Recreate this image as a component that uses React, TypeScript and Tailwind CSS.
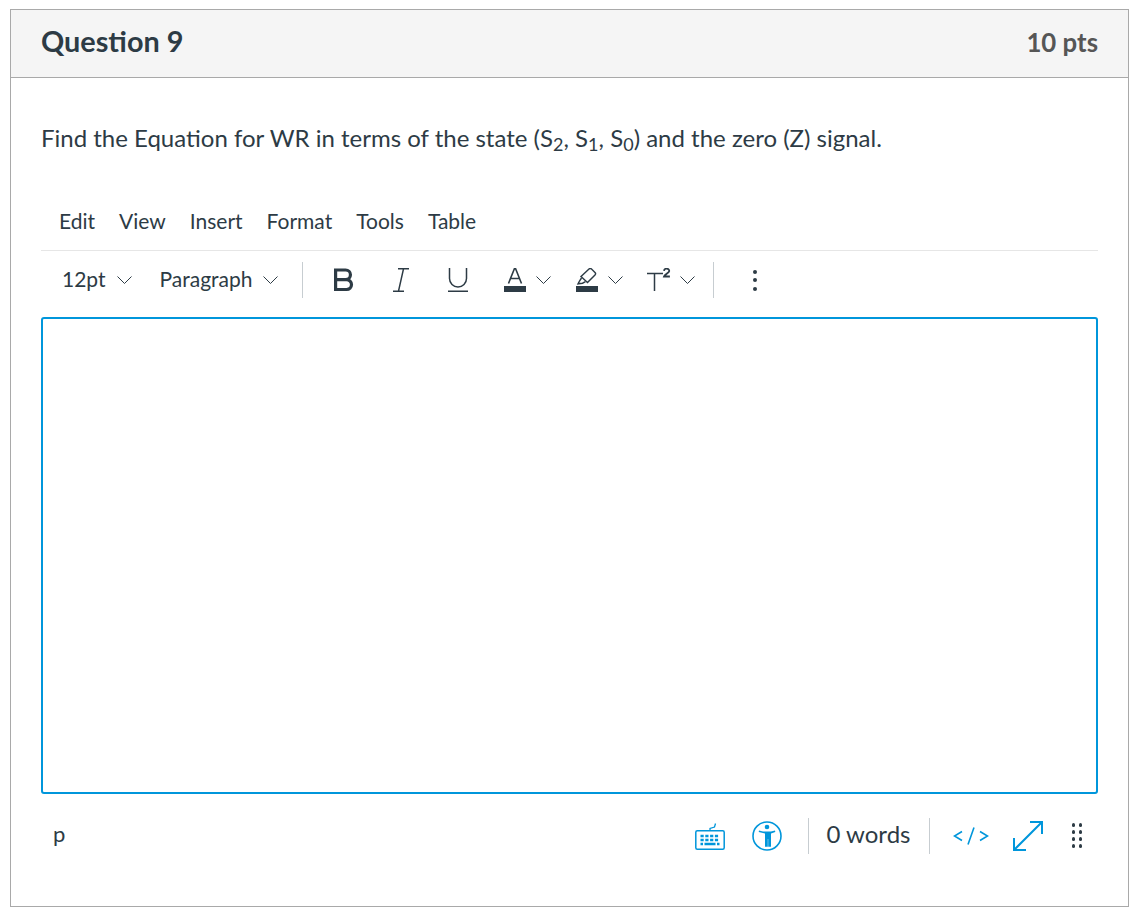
const Chev = () => (
  <svg width="15" height="8" viewBox="0 0 15 8" fill="none" stroke="#2d3b45" strokeWidth="1" className="mt-[-1px]">
    <path d="M.5.5l7 7 7-7" />
  </svg>
);

const Divider = ({ className }: { className: string }) => <div className={`w-px bg-[#c7cdd1] ${className}`} />;

const menus = [
  { name: "Edit", cls: "ml-[18px]" },
  { name: "View", cls: "ml-[24px]" },
  { name: "Insert", cls: "ml-[24px]" },
  { name: "Format", cls: "ml-[24px]" },
  { name: "Tools", cls: "ml-[24px]" },
  { name: "Table", cls: "ml-[24px]" },
];

const App = () => {
  return (
    <div className="w-[1143px] h-[916px] bg-white pt-[9px] pl-[10px] font-['Lato',sans-serif] text-[#2d3b45] overflow-hidden">
      <div className="w-[1119px] h-[898px] border border-[#a9a9a9] flex flex-col">
        {/* Header */}
        <div className="h-[68px] shrink-0 bg-[#f5f5f5] border-b border-[#a9a9a9] flex items-center justify-between pl-[30px] pr-[30px]">
          <div className="text-[28.8px] font-bold leading-none -mt-[5px]">Question 9</div>
          <div className="text-[25.8px] font-bold leading-none text-[#565656] -mt-[1px]">10 pts</div>
        </div>

        {/* Question text */}
        <div className="pl-[30px] pt-[44px] text-[24px] leading-[32px] h-[126px] shrink-0">
          Find the Equation for WR in terms of the state (S<sub className="text-[18px] leading-none -bottom-[4px]">2</sub>, S
          <sub className="text-[18px] leading-none -bottom-[4px]">1</sub>, S<sub className="text-[18px] leading-none -bottom-[4px]">0</sub>) and the zero (Z) signal.
        </div>

        {/* Editor */}
        <div className="pl-[30px] pr-[30px] flex flex-col">
          <div className="h-[47px] pb-[12px] flex items-center text-[21px] border-b border-[#e6e6e6]">
            {menus.map((m) => (
              <span key={m.name} className={m.cls}>
                {m.name}
              </span>
            ))}
          </div>

          <div className="h-[58px] mb-[8px] flex items-center text-[21px]">
            <span className="ml-[21px] -mt-[2px]">12pt</span>
            <span className="ml-[11px]"><Chev /></span>
            <span className="ml-[28px] -mt-[2px]">Paragraph</span>
            <span className="ml-[11px]"><Chev /></span>
            <Divider className="h-[36px] ml-[24px]" />
            <svg className="ml-[31px]" width="20" height="24" viewBox="0 0 20 24" fill="none" stroke="#2d3b45" strokeWidth="3.200">
              <path d="M1.600 2h10a4.800 4.800 0 0 1 0 9.700h-10 11a4.900 4.900 0 0 1 0 9.800h-11z" />
            </svg>
            <svg className="ml-[39px]" width="16" height="24" viewBox="0 0 16 24" fill="none" stroke="#2d3b45" strokeWidth="1.500">
              <path d="M5 .8h11M0 23.200h11M10.500.8 5.500 23.200" />
            </svg>
            <svg className="ml-[39px]" width="20" height="24" viewBox="0 0 20 24" fill="none" stroke="#2d3b45" strokeWidth="1.500">
              <path d="M1.500 0v10.500a8.500 8.500 0 0 0 17 0V0M0 23.200h20" />
            </svg>
            <svg className="ml-[36px]" width="22" height="24" viewBox="0 0 22 24" fill="none" stroke="#2d3b45">
              <path d="M4.500 15.500 10.500.5h1l6 15M6.500 10.500h9" strokeWidth="1.600" />
              <rect x="0" y="18" width="22" height="6" fill="#2d3b45" stroke="none" />
            </svg>
            <span className="ml-[10px]"><Chev /></span>
            <svg className="ml-[25px]" width="22" height="24" viewBox="0 0 22 24" fill="none" stroke="#2d3b45">
              <path d="M5 8.500 13 1a1.800 1.800 0 0 1 2.500 0L19 4.500a1.800 1.800 0 0 1 0 2.500l-7.500 7.500z" strokeWidth="1.400" />
              <path d="M5.500 10 3.500 13 2 15.800l4.500-.6 3-1.500" strokeWidth="1.400" />
              <rect x="0" y="18" width="22" height="6" fill="#2d3b45" stroke="none" />
            </svg>
            <span className="ml-[10px]"><Chev /></span>
            <svg className="ml-[24px]" width="24" height="24" viewBox="0 0 24 24" fill="none" stroke="#2d3b45">
              <path d="M0 5.500h16M7.500 5.500V23" strokeWidth="1.500" />
              <path d="M17 2.800c.300-3 5.500-2.700 5.200.3-.200 1.700-4.600 3.500-5.200 5.400h5.900" strokeWidth="1.800" />
            </svg>
            <span className="ml-[9px]"><Chev /></span>
            <Divider className="h-[36px] ml-[18px]" />
            <div className="ml-[39px] flex flex-col gap-[4.500px]">
              <div className="w-[4px] h-[4px] rounded-full bg-[#2d3b45]" />
              <div className="w-[4px] h-[4px] rounded-full bg-[#2d3b45]" />
              <div className="w-[4px] h-[4px] rounded-full bg-[#2d3b45]" />
            </div>
          </div>

          <div className="h-[477px] border-2 border-[#0096db] rounded-[3px]" />

          {/* Status bar */}
          <div className="h-[83px] flex items-center text-[#2d3b45]">
            <span className="ml-[12px] text-[22px] -mt-[5px]">p</span>
            <div className="ml-auto mr-[16px] flex items-center">
              <svg width="30" height="27" viewBox="0 0 30 27" fill="none" stroke="#0096db" strokeWidth="1.500" className="mt-[2px]">
                <rect x=".8" y="7.800" width="28.400" height="18.400" rx="1.500" />
                <path d="M15 7.500V5.500l4.500-1.500L20.500.5" strokeWidth="1.300" />
                <path d="M5.500 13h3.200M10.300 13h3.200M15.100 13h3.200M19.900 13h3.200M5.500 17h3.200M10.300 17h3.200M15.100 17h3.200M19.900 17h3.200M9.500 21h11M5.500 21h2.500M22 21h2.500" strokeWidth="2.600" />
              </svg>
              <svg className="ml-[27px]" width="30" height="30" viewBox="0 0 30 30" fill="none">
                <circle cx="15" cy="15" r="14" stroke="#0096db" strokeWidth="1.600" />
                <circle cx="15" cy="6" r="2.300" fill="#0096db" />
                <path d="m7 9.500 4 1h8l4-1 .3 1.500-4.300 1.500v13.200h-2.800V18h-.4v7.700h-2.800V12.500L6.700 11z" fill="#0096db" />
              </svg>
              <Divider className="h-[36px] ml-[26px]" />
              <span className="ml-[18px] text-[24px] leading-none w-[84px] -mt-[4px]">0 words</span>
              <Divider className="h-[36px] ml-[18px]" />
              <svg className="ml-[23px]" width="36" height="18" viewBox="0 0 36 18" fill="none" stroke="#0096db" strokeWidth="1.600">
                <path d="M9 4.500 1.500 9 9 13.500M27 4.500 34.500 9 27 13.500M21 .5l-6 17" />
              </svg>
              <svg className="ml-[24px]" width="30" height="30" viewBox="0 0 30 30" fill="none" stroke="#0096db" strokeWidth="2">
                <path d="M1 29 29 1M17 1h12v12M1 17v12h12" />
              </svg>
              <div className="ml-[29px] grid grid-cols-2 gap-x-[3.500px] gap-y-[3.500px]">
                {[0, 1, 2, 3, 4, 5, 6, 7].map((i) => (
                  <div key={i} className="w-[3.500px] h-[3.500px] rounded-full bg-[#2d3b45]" />
                ))}
              </div>
            </div>
          </div>
        </div>
      </div>
    </div>
  );
};

export default App;
